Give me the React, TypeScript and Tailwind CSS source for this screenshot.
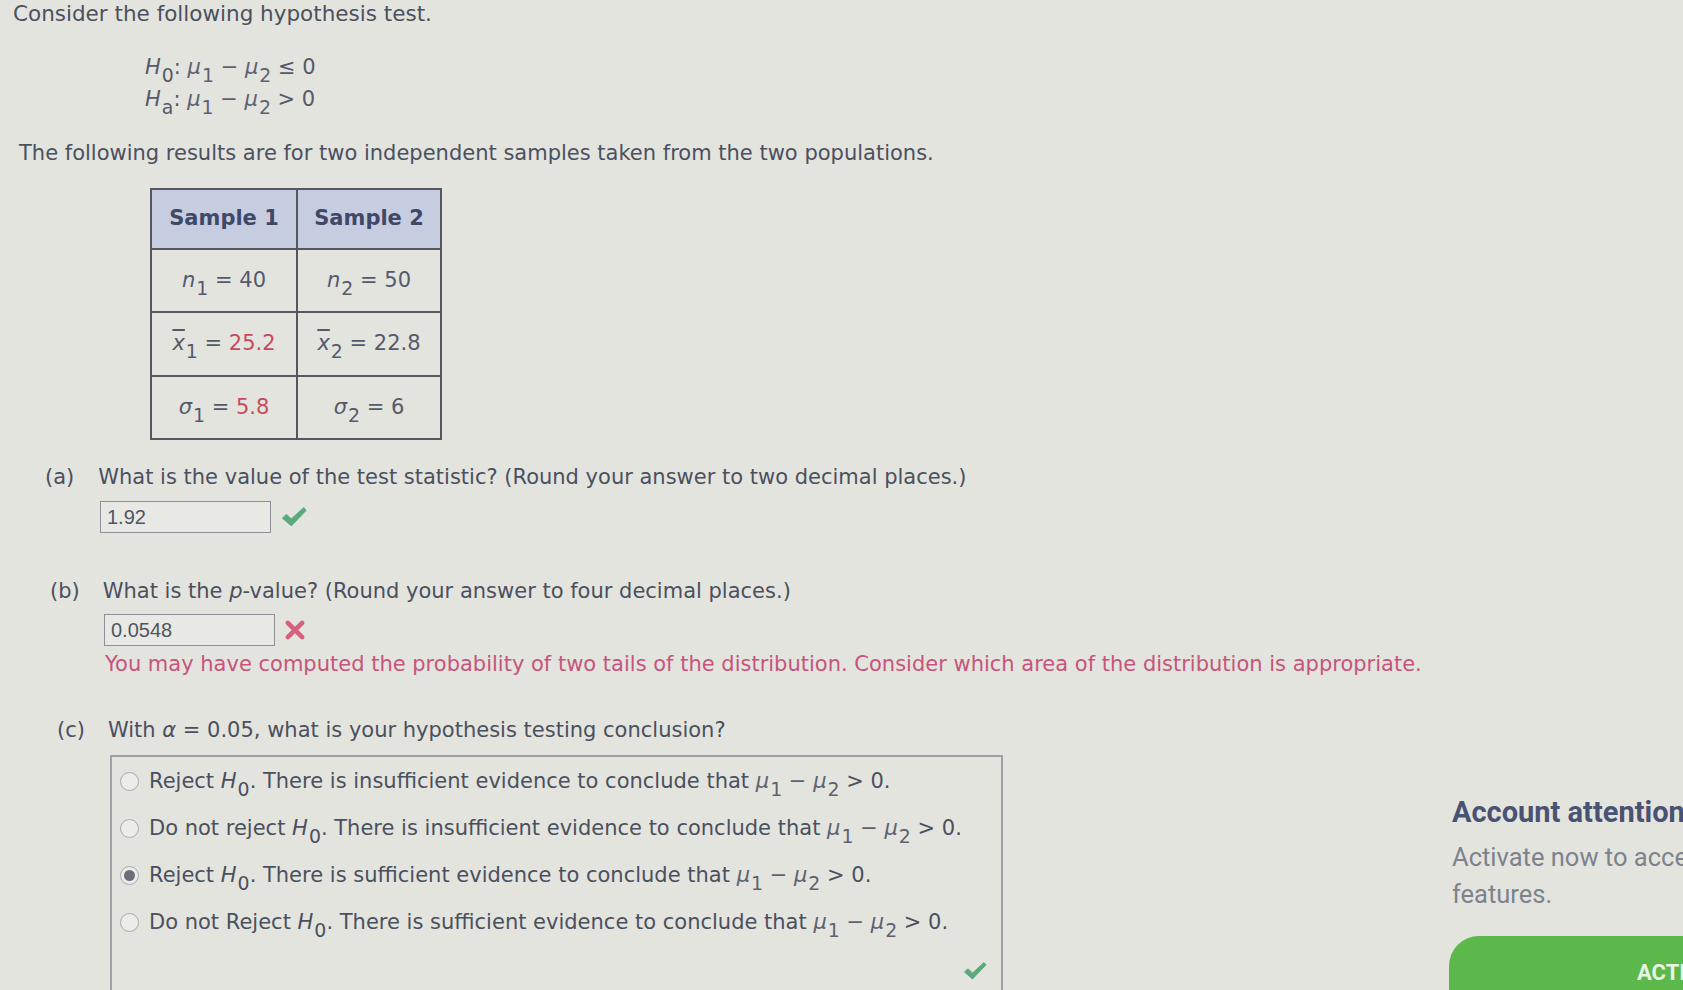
import React from 'react';

// Hypothesis test homework page (photographed screen)

const Sub = ({ children }: { children: React.ReactNode }) => (
  <span className="relative top-[0.42em] text-[0.9em] ml-[1px] not-italic">{children}</span>
);

const Mu = ({ n }: { n: string }) => (
  <>
    <i>μ</i>
    <Sub>{n}</Sub>
  </>
);

const Diff = () => (
  <span className="text-[#5d6272]">
    <Mu n="1" /> − <Mu n="2" />
  </span>
);

const Check = ({ className = '' }: { className?: string }) => (
  <svg viewBox="0 0 24 20" className={className}>
    <path d="M1.5 11 L5 7.8 L9.5 12 L21 1.5 L23 3.8 L9.5 18 Z" fill="#5caa7c" stroke="#5caa7c" strokeWidth="1" strokeLinejoin="round" />
  </svg>
);

const Cross = () => (
  <svg viewBox="0 0 20 20" className="w-[22px] h-[22px]">
    <path d="M3.5 3.5 L16.5 16.5 M16.5 3.5 L3.5 16.5" stroke="#d8607f" strokeWidth="4.2" strokeLinecap="round" />
  </svg>
);

const Radio = ({ checked = false }: { checked?: boolean }) => (
  <span className="w-[19px] h-[19px] rounded-full border-[1.5px] border-[#a9aab0] bg-[#ecece8] flex items-center justify-center shrink-0">
    {checked && <span className="w-[11px] h-[11px] rounded-full bg-[#6b6e78]" />}
  </span>
);

const options = [
  { pre: 'Reject', mid: 'There is insufficient evidence to conclude that', checked: false },
  { pre: 'Do not reject', mid: 'There is insufficient evidence to conclude that', checked: false },
  { pre: 'Reject', mid: 'There is sufficient evidence to conclude that', checked: true },
  { pre: 'Do not Reject', mid: 'There is sufficient evidence to conclude that', checked: false },
];

export default function App() {
  return (
    <div
      className="relative w-[1683px] h-[990px] overflow-hidden bg-[#e3e4de] text-[#4b505f] text-[21px]"
      style={{ fontFamily: '"DejaVu Sans", Verdana, sans-serif' }}
    >
      <div className="pl-[13px] pt-[1px]">
        <p className="text-[21.5px] leading-[26px]">Consider the following hypothesis test.</p>

        {/* Hypotheses */}
        <div className="ml-[132px] mt-[24px] leading-[32px] text-[#55596a]">
          <div>
            <i>H</i>
            <Sub>0</Sub>: <Diff /> ≤ 0
          </div>
          <div>
            <i>H</i>
            <Sub>a</Sub>: <Diff /> &gt; 0
          </div>
        </div>

        <p className="ml-[6px] mt-[25px] leading-[26px]">
          The following results are for two independent samples taken from the two populations.
        </p>

        {/* Sample table */}
        <table className="ml-[137px] mt-[22px] border-collapse text-center text-[#545a6b]">
          <thead>
            <tr className="bg-[#c6cde1] h-[60px]">
              <th className="w-[146px] border-2 border-[#555860] font-bold text-[#3f4866]">Sample 1</th>
              <th className="w-[144px] border-2 border-[#555860] font-bold text-[#3f4866]">Sample 2</th>
            </tr>
          </thead>
          <tbody>
            <tr className="h-[63px]">
              <td className="border-2 border-[#555860]">
                <i>n</i>
                <Sub>1</Sub> = 40
              </td>
              <td className="border-2 border-[#555860]">
                <i>n</i>
                <Sub>2</Sub> = 50
              </td>
            </tr>
            <tr className="h-[64px]">
              <td className="border-2 border-[#555860]">
                <i className="overline">x</i>
                <Sub>1</Sub> = <span className="text-[#c94a5f]">25.2</span>
              </td>
              <td className="border-2 border-[#555860]">
                <i className="overline">x</i>
                <Sub>2</Sub> = 22.8
              </td>
            </tr>
            <tr className="h-[63px]">
              <td className="border-2 border-[#555860]">
                <i>σ</i>
                <Sub>1</Sub> = <span className="text-[#c94a5f]">5.8</span>
              </td>
              <td className="border-2 border-[#555860]">
                <i>σ</i>
                <Sub>2</Sub> = 6
              </td>
            </tr>
          </tbody>
        </table>

        {/* (a) */}
        <div className="ml-[32px] mt-[24px] flex gap-[24px] leading-[26px]">
          <span>(a)</span>
          <span>What is the value of the test statistic? (Round your answer to two decimal places.)</span>
        </div>
        <div className="ml-[87px] mt-[11px] flex items-center gap-[10px]">
          <div
            className="w-[171px] h-[32px] border-[1.5px] border-[#8c909a] bg-[#e8e9e4] px-[6px] flex items-center text-[20px] text-[#4f5562]"
            style={{ fontFamily: '"Liberation Sans", Arial, sans-serif' }}
          >
            1.92
          </div>
          <Check className="w-[26px] h-[22px]" />
        </div>

        {/* (b) */}
        <div className="ml-[37px] mt-[45px] flex gap-[23px] leading-[26px]">
          <span>(b)</span>
          <span>
            What is the <i>p</i>-value? (Round your answer to four decimal places.)
          </span>
        </div>
        <div className="ml-[91px] mt-[10px] flex items-center gap-[9px]">
          <div
            className="w-[171px] h-[32px] border-[1.5px] border-[#8c909a] bg-[#e8e9e4] px-[6px] flex items-center text-[20px] text-[#4f5562]"
            style={{ fontFamily: '"Liberation Sans", Arial, sans-serif' }}
          >
            0.0548
          </div>
          <Cross />
        </div>
        <p className="ml-[92px] mt-[5px] leading-[26px] text-[#c7547c]">
          You may have computed the probability of two tails of the distribution. Consider which area of the distribution is appropriate.
        </p>

        {/* (c) */}
        <div className="ml-[44px] mt-[40px] flex gap-[23px] leading-[26px]">
          <span>(c)</span>
          <span>
            With <i>α</i> = 0.05, what is your hypothesis testing conclusion?
          </span>
        </div>
        <div className="relative ml-[97px] mt-[12px] w-[893px] h-[240px] border-2 border-[#9ea2a8] pt-[10px] pl-[8px]">
          <div className="flex flex-col gap-[19px]">
            {options.map((o, i) => (
              <div key={i} className="flex items-center gap-[10px] leading-[28px]">
                <Radio checked={o.checked} />
                <span>
                  {o.pre} <i>H</i>
                  <Sub>0</Sub>. {o.mid} <Diff /> &gt; 0.
                </span>
              </div>
            ))}
          </div>
          <Check className="absolute right-[14px] bottom-[12px] w-[24px] h-[20px]" />
        </div>
      </div>

      {/* Account notification overlay */}
      <div
        className="absolute left-[1452px] top-[795px] w-[300px]"
        style={{ fontFamily: 'Roboto, "Liberation Sans", sans-serif' }}
      >
        <p className="text-[29px] font-bold text-[#4a5274] leading-[34px] whitespace-nowrap">Account attention</p>
        <p className="text-[25.5px] text-[#7d828d] leading-[37px] mt-[10px] whitespace-nowrap">Activate now to access</p>
        <p className="text-[25.5px] text-[#7d828d] leading-[37px]">features.</p>
      </div>
      <div
        className="absolute left-[1449px] top-[936px] w-[320px] h-[90px] rounded-[30px] bg-[#5cb84a] pl-[188px] pt-[20px] text-[22px] font-bold text-[#e8f3e2]"
        style={{ fontFamily: 'Roboto, "Liberation Sans", sans-serif' }}
      >
        ACTIVATE
      </div>
    </div>
  );
}
